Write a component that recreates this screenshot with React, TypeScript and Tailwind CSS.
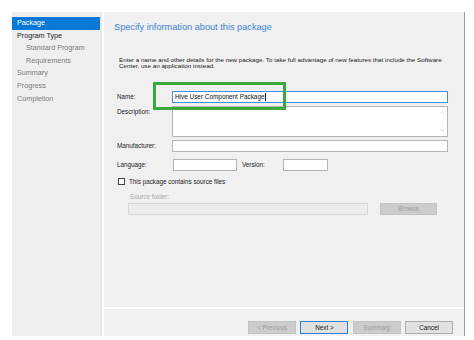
import { ChevronUp, ChevronDown } from "lucide-react";

const navItems = [
  { label: "Package", active: true, indent: false, dark: false },
  { label: "Program Type", active: false, indent: false, dark: true },
  { label: "Standard Program", active: false, indent: true, dark: false },
  { label: "Requirements", active: false, indent: true, dark: false },
  { label: "Summary", active: false, indent: false, dark: false },
  { label: "Progress", active: false, indent: false, dark: false },
  { label: "Completion", active: false, indent: false, dark: false },
];

const buttons = [
  { label: "< Previous", kind: "disabled" },
  { label: "Next >", kind: "default" },
  { label: "Summary", kind: "disabled" },
  { label: "Cancel", kind: "normal" },
];

export default function App() {
  return (
    <div className="relative w-[474px] h-[340px] bg-white pl-[12px] pt-[12px] font-['Liberation_Sans',Arial,sans-serif] overflow-hidden">
      <div className="flex h-[324px] gap-[2px]">
        {/* wizard steps */}
        <div className="w-[90px] bg-[#efefef] pt-[5px] border-r-[2px] border-[#e8e8e8]">
          {navItems.map((item) => (
            <div
              key={item.label}
              className={
                "h-[12.6px] leading-[12.6px] text-[7.2px] " +
                (item.indent ? "pl-[14px] " : "pl-[5px] ") +
                (item.active
                  ? "bg-[#0a78d6] text-white"
                  : item.dark
                    ? "text-[#222]"
                    : "text-[#7a7a7a]")
              }
            >
              {item.label}
            </div>
          ))}
        </div>

        {/* page */}
        <div className="w-[361px] flex flex-col border-r border-[#9c9c9c]">
          <div className="h-[295px] bg-[#f0f0f0]">
            <h1 className="mt-[9px] pl-[10px] text-[9.2px] leading-[12px] text-[#3d84d4]">
              Specify information about this package
            </h1>
            <p className="mt-[24px] pl-[15px] whitespace-nowrap text-[6.25px] leading-[6.4px] text-[#222]">
              Enter a name and other details for the new package. To take full advantage of new features that include the Software
              <br />
              Center, use an application instead.
            </p>

            <div className="pl-[13px] pr-[16px] text-[6.3px] text-[#222]">
              <div className="mt-[21px] flex items-center h-[12px]">
                <span className="w-[55px]">Name:</span>
                <div className="flex-1 h-[12px] bg-white border border-[#3d8fe0] flex items-center pl-[2px] text-[6.4px] text-[#111]">
                  Hive User Component Package
                  <span className="inline-block w-px h-[8px] bg-[#111]" />
                </div>
              </div>

              <div className="mt-[3px] flex items-start">
                <span className="w-[55px] pt-[1px]">Description:</span>
                <div className="flex-1 h-[31px] bg-white border border-[#b4b4b4] flex justify-end">
                  <div className="w-[9px] flex flex-col justify-between items-center py-[2px] text-[#b0b0b0]">
                    <ChevronUp size={7} strokeWidth={1.5} />
                    <ChevronDown size={7} strokeWidth={1.5} />
                  </div>
                </div>
              </div>

              <div className="mt-[3px] flex items-center h-[12px]">
                <span className="w-[55px]">Manufacturer:</span>
                <div className="flex-1 h-[12px] bg-white border border-[#b4b4b4]" />
              </div>

              <div className="mt-[7px] flex items-center h-[12px]">
                <span className="w-[56px]">Language:</span>
                <div className="w-[64px] h-[12px] bg-white border border-[#b4b4b4]" />
                <span className="ml-[5px] w-[41px]">Version:</span>
                <div className="w-[45px] h-[12px] bg-white border border-[#b4b4b4]" />
              </div>

              <div className="mt-[7px] flex items-center h-[8px]">
                <div className="ml-[1px] w-[7px] h-[7px] bg-white border border-[#444]" />
                <span className="ml-[4px]">This package contains source files</span>
              </div>

              <div className="mt-[8px] pl-[13px] h-[6px] leading-[6px] text-[#a8a8a8]">
                Source folder:
              </div>
              <div className="mt-[3px] flex items-center pl-[11px]">
                <div className="w-[240px] h-[12px] bg-[#ececec] border border-[#d6d6d6]" />
                <div className="ml-[12px] w-[57px] h-[12px] bg-[#cccccc] border border-[#c4c4c4] flex items-center justify-center text-[#a0a0a0]">
                  Browse
                </div>
              </div>
            </div>
          </div>

          <div className="h-[2px] bg-white" />

          <div className="flex-1 bg-[#f0f0f0] flex items-end justify-end gap-[4.3px] pr-[11px] pb-[2px]">
            {buttons.map((b) => (
              <div
                key={b.label}
                className={
                  "w-[48px] h-[13px] flex items-center justify-center text-[6.3px] border " +
                  (b.kind === "disabled"
                    ? "bg-[#cccccc] border-[#c4c4c4] text-[#9a9a9a]"
                    : b.kind === "default"
                      ? "bg-[#e1e1e1] border-[#2b7fd4] text-[#111]"
                      : "bg-[#e1e1e1] border-[#adadad] text-[#111]")
                }
              >
                {b.label}
              </div>
            ))}
          </div>
        </div>
      </div>

      {/* callout */}
      <div className="absolute left-[153px] top-[82px] w-[133px] h-[28px] border-[3px] border-[#37aa3c]" />
    </div>
  );
}
